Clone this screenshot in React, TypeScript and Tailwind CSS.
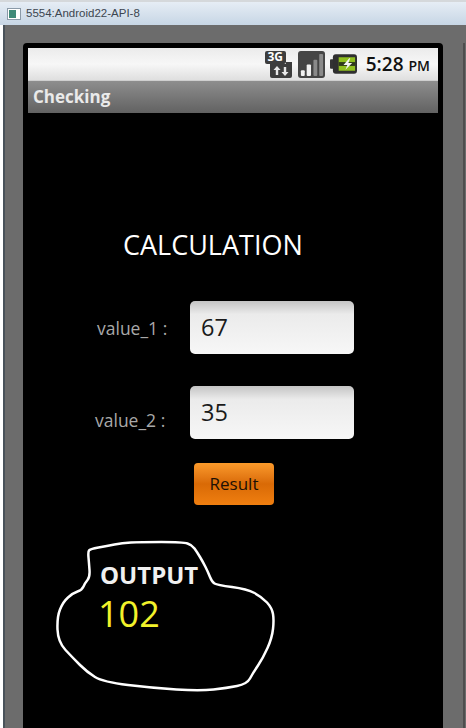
const sans = "font-['Open_Sans','Noto_Sans',sans-serif]";

// hand drawn outline around the output, smoothed through segment midpoints
const outline = [
  [48, 22], [50, 19], [67, 16], [82, 13], [100, 12], [143, 12], [152, 15], [157, 22], [163, 32], [168, 42],
  [172, 52], [177, 55], [207, 59], [222, 67], [232, 78], [234, 90], [232, 108], [223, 128], [213, 143], [207, 154],
  [187, 158], [160, 161], [113, 158], [63, 152], [47, 142], [33, 128], [18, 112], [17, 87], [23, 72], [33, 63],
  [42, 60], [45, 53], [50, 47], [49, 33],
];

const outlinePath = outline
  .map((p, i) => {
    const next = outline[(i + 1) % outline.length];
    const mid = `${(p[0] + next[0]) / 2} ${(p[1] + next[1]) / 2}`;
    return i === 0 ? `M${mid}` : `Q${p[0]} ${p[1]} ${mid}`;
  })
  .join(" ") + ` Q${outline[0][0]} ${outline[0][1]} ${(outline[0][0] + outline[1][0]) / 2} ${(outline[0][1] + outline[1][1]) / 2}Z`;

function FieldRow({ label, value, labelClass, className }: { label: string; value: string; labelClass: string; className: string }) {
  return (
    <div className={`flex items-center ${className}`}>
      <span className={`text-[17.500px] leading-none text-[#a9a9a9] ${labelClass}`}>{label}</span>
      <div className="ml-auto flex h-[53px] w-[164px] items-center rounded-[5px] bg-gradient-to-b from-[#c4c4c4] via-[#ebebeb] via-25% to-[#f7f7f7] pl-[11px] text-[23.500px] text-[#1a1a1a]">
        {value}
      </div>
    </div>
  );
}

function NetworkIcon() {
  return (
    <div className="relative h-[27px] w-[27px]">
      <div className="flex h-[13px] w-[21px] items-center justify-center rounded-[2px] bg-[#3d3d3d] text-[12px] font-bold leading-none text-white">3G</div>
      <svg className="absolute bottom-0 right-0" width="27" height="27" viewBox="0 0 27 27">
        <path d="M5 13h16v-2h6v14a2 2 0 0 1-2 2H7a2 2 0 0 1-2-2z" fill="#3d3d3d" />
        <path d="M12 15l-3.500 4h2.300v5h2.400v-5h2.300z" fill="#e8e8e8" />
        <path d="M20 25l3.500-4h-2.300v-5h-2.400v5h-2.300z" fill="#e8e8e8" />
      </svg>
    </div>
  );
}

function SignalIcon() {
  return (
    <svg width="27" height="27" viewBox="0 0 28 28">
      <rect width="28" height="28" rx="3" fill="#454545" />
      <rect x="3" y="20" width="4" height="6" rx="1" fill="#f2f2f2" />
      <rect x="9" y="14" width="4.500" height="12" rx="1" fill="#f2f2f2" />
      <rect x="16" y="9" width="4" height="17" rx="1" fill="#8a8a8a" />
      <rect x="22" y="3" width="4" height="23" rx="1" fill="#8a8a8a" />
    </svg>
  );
}

function BatteryIcon() {
  return (
    <svg width="27" height="20" viewBox="0 0 28 20">
      <rect x="0" y="5" width="4" height="10" rx="1" fill="#333" />
      <rect x="3" y="0" width="25" height="20" rx="3" fill="#2f2f2f" />
      <rect x="9" y="3" width="17" height="14" fill="#8fbf1f" />
      <rect x="9" y="8" width="17" height="4" fill="#2f3a1a" />
      <path d="M20 4l-6 7h4l-2 5 7-7h-4l2-5z" fill="#f4f4f4" />
    </svg>
  );
}

function Blob() {
  return (
    <svg className="absolute left-[-60px] top-[-31px]" width="250" height="170" viewBox="0 0 250 170">
      <path d={outlinePath} fill="none" stroke="#fff" strokeWidth="2.500" strokeLinejoin="round" />
    </svg>
  );
}

export default function App() {
  return (
    <div className={`flex h-[728px] w-[466px] flex-col overflow-hidden bg-white ${sans}`}>
      <div className="flex h-[25px] shrink-0 items-center gap-[5px] border-t-2 border-[#d5d8db] bg-gradient-to-b from-[#e6edf5] to-[#c7d6e5] pl-[7px]">
        <div className="flex h-[12px] w-[14px] items-center border border-[#8b9aa8] bg-white pl-[1px]">
          <div className="h-[8px] w-[7px] bg-[#3f8a78]" />
        </div>
        <span className="font-['Liberation_Sans',sans-serif] text-[11.500px] text-[#3c4650]">5554:Android22-API-8</span>
      </div>
      <div className="flex min-h-0 flex-1 pl-[3px]">
        <div className="w-[2px] bg-[#49525a]" />
        <div className="flex min-w-0 flex-1 bg-[#6c6c6c] pl-[18px] pt-[18px]">
          <div className="flex w-[420px] flex-col rounded-t-[4px] bg-black px-[5px] pt-[5px]">
            <div className="flex h-[32px] shrink-0 items-center justify-end bg-gradient-to-b from-[#ebebeb] via-[#f7f7f7] to-[#dfdfdf] pr-[8px]">
              <div className="mr-[6px]"><NetworkIcon /></div>
              <div className="mr-[5px]"><SignalIcon /></div>
              <BatteryIcon />
              <span className="ml-[9px] text-[19px] font-semibold leading-none text-[#111]">
                5:28 <span className="text-[14px]">PM</span>
              </span>
            </div>
            <div className="flex h-[33px] shrink-0 items-center border-t border-[#cfcfcf] bg-gradient-to-b from-[#8e8e8e] to-[#626262] pl-[5px] text-[17px] font-bold text-[#eaeaea]">
              Checking
            </div>
            <div className="flex flex-1 flex-col pt-[115px]">
              <div className="ml-[95px] text-[27px] leading-[34px] text-white">CALCULATION</div>
              <FieldRow label="value_1 :" value="67" labelClass="ml-[69px] mt-[2px]" className="mt-[39px] mr-[84px]" />
              <FieldRow label="value_2 :" value="35" labelClass="ml-[67px] mt-[17px]" className="mt-[32px] mr-[84px]" />
              <div className="ml-[166px] mt-[24px] flex h-[42px] w-[80px] items-center justify-center rounded-[4px] bg-gradient-to-b from-[#fb9a2a] via-[#d96a06] to-[#f07f10] text-[17px] text-[#1c1005]">
                Result
              </div>
              <div className="relative ml-[72px] mt-[56px]">
                <Blob />
                <div className="relative text-[24px] font-bold leading-[28px] text-[#f0f0f0]">OUTPUT</div>
                <div className="relative ml-[-2px] text-[36px] leading-[50px] text-[#f2f22a]">102</div>
              </div>
            </div>
          </div>
          <div className="ml-auto mr-[1px] h-full w-[2px] bg-[#4e4e4e]" />
        </div>
      </div>
    </div>
  );
}
